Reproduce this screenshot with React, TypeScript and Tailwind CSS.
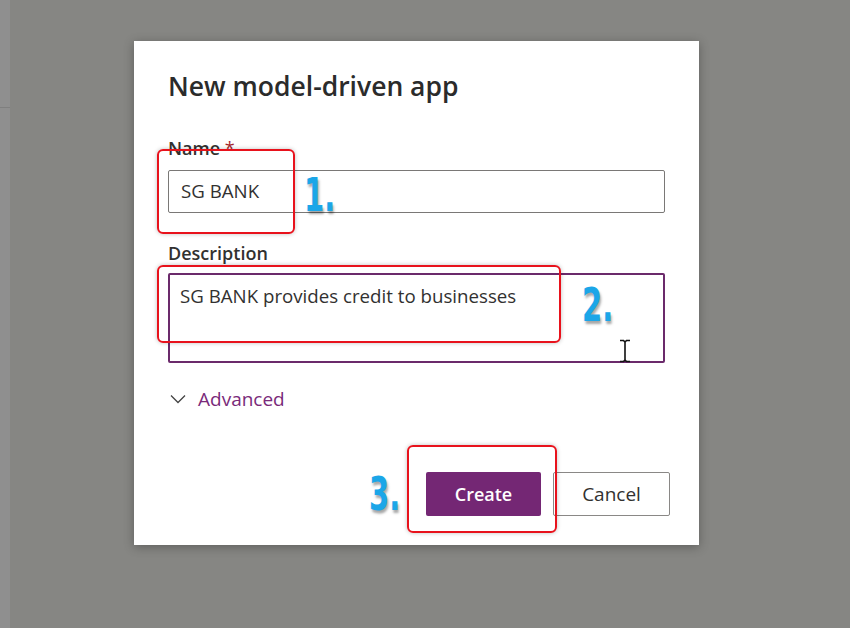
import React from "react";

const font = { fontFamily: '"Open Sans", "Noto Sans", sans-serif' };

function Num({ children, className }: { children: React.ReactNode; className: string }) {
  return (
    <span
      className={`absolute origin-left text-[46px] font-bold leading-none text-[#1ba6e8] [text-shadow:2px_3px_3px_rgba(0,0,0,0.35)] ${className}`}
      style={{ fontFamily: '"DejaVu Sans Condensed", "DejaVu Sans", sans-serif', transform: "scaleX(0.7)" }}
    >
      {children}
    </span>
  );
}

function Mark({ className }: { className: string }) {
  return (
    <div
      className={`pointer-events-none absolute rounded-[6px] border-2 border-[#e8121c] shadow-[0_0_4px_rgba(0,0,0,0.25)] ${className}`}
    />
  );
}

export default function App() {
  return (
    <div className="relative flex h-[628px] w-[850px] overflow-hidden bg-[#868683]" style={font}>
      <div className="flex w-[10px] flex-col bg-[#8f8f8f]">
        <div className="h-[108px] border-b border-[#7f7f7f]" />
      </div>

      <div className="pl-[124px] pt-[41px]">
        <div className="flex h-[504px] w-[565px] flex-col bg-white px-[34px] pb-[29px] shadow-[0_2px_10px_rgba(0,0,0,0.3)]">
          <h1 className="pt-[27px] text-[26.5px] font-semibold leading-[36px] text-[#2b2b2b]">New model-driven app</h1>

          <label className="mt-[31px] text-[18px] font-semibold leading-[26px] text-[#323130]">
            Name <span className="font-normal text-[#a4262c]">*</span>
          </label>
          <div className="mt-[9px] flex h-[43px] items-center rounded-[2px] border border-[#7a7876] px-[12px] text-[18.7px] text-[#323130]">
            SG BANK
          </div>

          <label className="mt-[27px] text-[18px] font-semibold leading-[26px] text-[#323130]">Description</label>
          <div className="mt-[7px] h-[90px] rounded-[2px] border-2 border-[#6b2a6b] px-[10px] pt-[8px] text-[18.7px] leading-[26px] text-[#323130]">
            SG BANK provides credit to businesses
          </div>

          <div className="mt-[23px] flex items-center gap-[12px] text-[#7a2a7a]">
            <svg width="16" height="10" viewBox="0 0 16 10" className="ml-[2px]">
              <path d="M1 1.5 L8 8.5 L15 1.5" fill="none" stroke="#444" strokeWidth="1.3" />
            </svg>
            <span className="text-[19px] leading-[26px]">Advanced</span>
          </div>

          <div className="mt-auto flex justify-end gap-[12px]">
            <button className="h-[44px] w-[115px] rounded-[2px] bg-[#742774] text-[18px] font-semibold text-white">
              Create
            </button>
            <button className="-mr-[5px] h-[44px] w-[117px] rounded-[2px] border border-[#8a8886] bg-white text-[19px] text-[#323130]">
              Cancel
            </button>
          </div>
        </div>
      </div>

      <Mark className="left-[157px] top-[149px] h-[85px] w-[138px]" />
      <Mark className="left-[157px] top-[265px] h-[78px] w-[404px]" />
      <Mark className="left-[407px] top-[445px] h-[88px] w-[150px]" />

      <Num className="left-[304px] top-[172px]">1.</Num>
      <Num className="left-[582px] top-[282px]">2.</Num>
      <Num className="left-[369px] top-[471px]">3.</Num>

      <svg className="absolute left-[617px] top-[339px]" width="16" height="24" viewBox="0 0 16 24">
        <path d="M3 1.5 H6.5 L8 3 L9.5 1.5 H13 M8 3 V21 M3 22.5 H6.5 L8 21 L9.5 22.5 H13" fill="none" stroke="#111" strokeWidth="1.6" />
      </svg>
    </div>
  );
}
